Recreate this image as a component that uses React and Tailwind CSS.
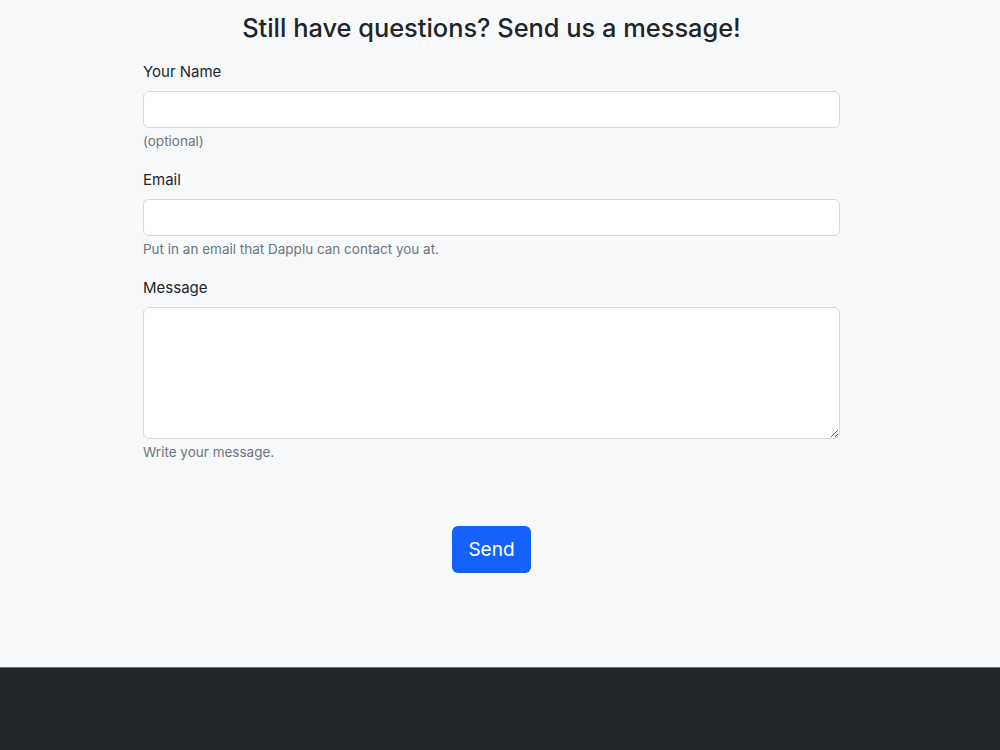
import React from "react";

function Field({ id, label, help, textarea }) {
  return (
    <div className="mb-4">
      <label htmlFor={id} className="block pt-px mb-[7px] text-[15px] leading-6 text-[#212529]">{label}</label>
      {textarea ? (
        <textarea
          id={id}
          className="block w-full h-[132px] px-3 py-1.5 bg-white border border-[#d5d9dd] rounded-md text-base"
        />
      ) : (
        <input
          id={id}
          type="text"
          className="block w-full h-[37px] px-3 py-1.5 bg-white border border-[#d5d9dd] rounded-md text-base"
        />
      )}
      <div className="mt-[3px] text-[13.5px] leading-5 text-[#6c757d]">{help}</div>
    </div>
  );
}

export default function App() {
  return (
    <div className="min-h-[750px] flex flex-col bg-[#f8f9fa] font-['Inter',sans-serif]">
      <main className="w-[697px] ml-[143px] pt-3 h-[667px]">
        <h3 className="text-center text-[25.4px] leading-8 font-medium text-[#212529] mb-[15px]">
          Still have questions? Send us a message!
        </h3>
        <form onSubmit={(e) => e.preventDefault()}>
          <Field id="name" label="Your Name" help="(optional)" />
          <Field id="email" label="Email" help="Put in an email that Dapplu can contact you at." />
          <Field id="message" label="Message" help="Write your message." textarea />
          <div className="flex justify-center pt-[48px]">
            <button
              type="submit"
              className="h-[47px] px-4 bg-[#1461fc] text-white text-[19px] leading-[30px] rounded-md"
            >
              Send
            </button>
          </div>
        </form>
      </main>
      <footer className="flex-1 bg-[#212529] border-t border-[#6c757d]" />
    </div>
  );
}
